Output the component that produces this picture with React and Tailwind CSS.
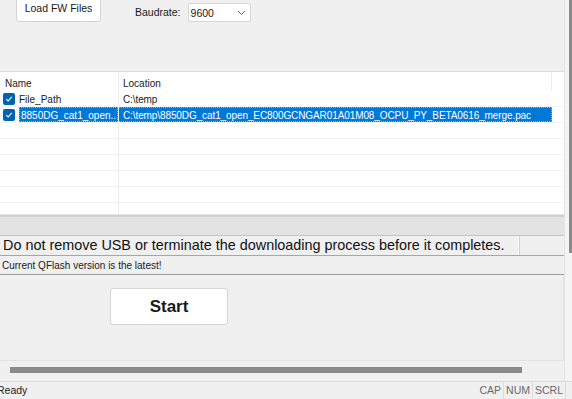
const ui = { fontFamily: '"Liberation Sans", Arial, sans-serif' }

const rows = [
  { name: 'File_Path', location: 'C:\\temp', checked: true },
  {
    name: '8850DG_cat1_open...',
    location: 'C:\\temp\\8850DG_cat1_open_EC800GCNGAR01A01M08_OCPU_PY_BETA0616_merge.pac',
    checked: true,
    selected: true,
  },
  {}, {}, {}, {}, {}, {},
]

const Check = () => (
  <span className="w-[12px] h-[12px] rounded-[2px] bg-[#0063b1] flex items-center justify-center shrink-0">
    <svg width="8" height="8" viewBox="0 0 8 8">
      <path d="M1.2 4.2 L3.1 6 L6.8 1.8" fill="none" stroke="white" strokeWidth="1.1" />
    </svg>
  </span>
)

export default function App() {
  return (
    <div className="w-[572px] h-[399px] overflow-hidden bg-[#f0f0f0] text-[#1a1a1a] flex flex-col" style={ui}>
      <div className="flex flex-1 min-h-0">
        <div className="w-[564px] flex flex-col">
          {/* toolbar */}
          <div className="h-[71px] flex items-start shrink-0">
            <button className="ml-[16px] -mt-[7px] w-[85px] h-[29px] bg-white border border-[#d3d3d3] rounded-[3px] text-[10.5px] pt-[3px]">
              Load FW Files
            </button>
            <span className="ml-[34px] mt-[5px] text-[10.5px]">Baudrate:</span>
            <div className="ml-[7px] mt-[3px] w-[63px] h-[19px] bg-white border border-[#d6d6d6] rounded-[2px] flex items-center justify-between px-[2px] text-[10.5px]">
              <span className="pt-[3px]">9600</span>
              <svg width="9" height="6" viewBox="0 0 9 6" className="mr-[2px]">
                <path d="M1 1 L4.5 4.5 L8 1" fill="none" stroke="#555" strokeWidth="0.9" />
              </svg>
            </div>
          </div>

          {/* file list */}
          <div className="h-[143px] shrink-0 bg-white border-t border-[#dcdcdc] overflow-hidden text-[10px]">
            <div className="h-[19px] flex items-center">
              <div className="w-[119px] h-full pl-[5px] pt-[3px] flex items-center border-r border-[#ececec]">Name</div>
              <div className="w-[433px] h-full pl-[4px] pt-[3px] flex items-center border-r border-[#ececec]">Location</div>
            </div>
            {rows.map((r, i) => (
              <div key={i} className="h-[16px] flex border-b border-[#f2f2f2]">
                <div className="w-[119px] flex items-center pl-[3px] gap-[4px] border-r border-[#ececec]">
                  {r.checked && <Check />}
                  {r.name && (
                    <span
                      className={
                        'whitespace-nowrap overflow-hidden pt-[1px] ' +
                        (r.selected ? 'bg-[#0078d7] text-white h-full flex-1 flex items-center pl-[1px] border border-dotted border-[#e8a060]' : '')
                      }
                    >
                      {r.name}
                    </span>
                  )}
                </div>
                <div
                  className={
                    'w-[433px] flex items-center pl-[4px] pt-[1px] whitespace-nowrap overflow-hidden tracking-[-0.1px] ' +
                    (r.selected ? 'bg-[#0078d7] text-white border-y border-r border-dotted border-[#e8a060]' : '')
                  }
                >
                  {r.location}
                </div>
              </div>
            ))}
          </div>

          {/* splitter */}
          <div className="h-[3px] bg-[#cfcfcf] border-t border-[#e4e4e4] shrink-0" />
          <div className="h-[19px] bg-[#e3e3e3] border-b border-[#c4c4c4] shrink-0" />

          {/* message */}
          <div className="h-[20px] flex shrink-0 border-b border-[#a6a6a6]">
            <div className="w-[519px] flex items-center pl-[3px] text-[14.4px] text-[#111] whitespace-nowrap overflow-hidden border-r border-white">
              Do not remove USB or terminate the downloading process before it completes.
            </div>
            <div className="flex-1 border-l border-[#d0d0d0]" />
          </div>
          <div className="h-[19px] flex items-center pl-[2px] text-[10px] border-b border-[#9c9c9c] shrink-0">
            Current QFlash version is the latest!
          </div>

          {/* start */}
          <div className="h-[86px] shrink-0 border-r border-b border-[#e2e2e2] flex items-start">
            <button className="ml-[110px] mt-[13px] w-[118px] h-[37px] bg-white border border-[#d5d5d5] rounded-[3px] text-[17px] font-bold pt-[1px]">
              Start
            </button>
          </div>

          {/* progress */}
          <div className="flex-1 flex items-start">
            <div className="ml-[10px] mt-[6px] w-[512px] h-[6px] bg-[#8a8a8a]" />
          </div>
        </div>

        {/* right strip */}
        <div className="w-[8px] border-l border-[#e4e4e4] bg-[#f4f4f4] flex justify-end">
          <div className="w-[3px] h-[253px] bg-[#8b8b8b]" />
        </div>
      </div>

      {/* status bar */}
      <div className="h-[18px] shrink-0 border-t border-[#dadada] flex items-center text-[10.5px]">
        <span className="-ml-[3px] text-[#222]">Ready</span>
        <div className="ml-auto flex h-full text-[#6a6a6a] mr-[6px]">
          <span className="px-[2px] flex items-center border-r border-[#dcdcdc]">CAP</span>
          <span className="px-[2px] flex items-center border-r border-[#dcdcdc]">NUM</span>
          <span className="px-[2px] flex items-center border-r border-[#dcdcdc]">SCRL</span>
        </div>
      </div>
    </div>
  )
}
